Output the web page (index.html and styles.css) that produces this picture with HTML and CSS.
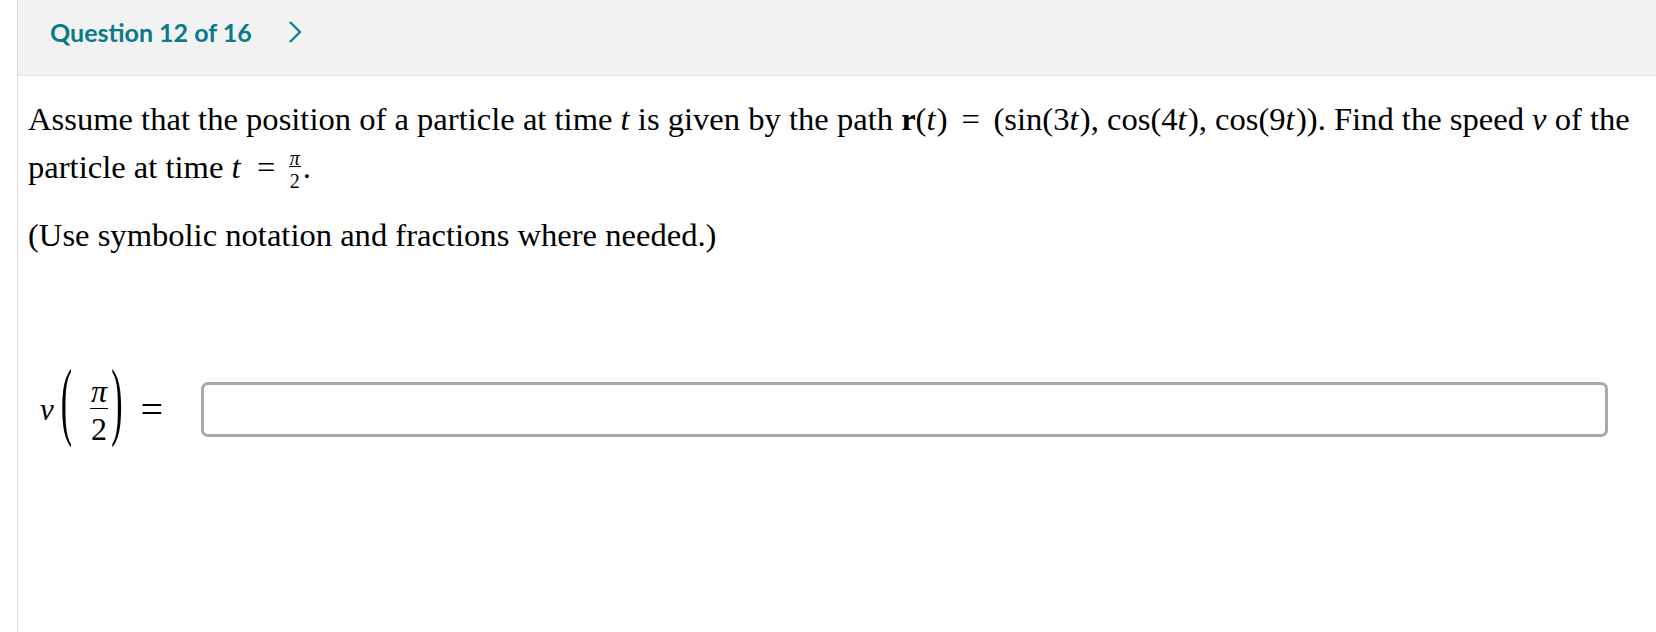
FILE: index.html
```html
<!DOCTYPE html>
<html lang="en">
<head>
<meta charset="utf-8">
<title>Question 12 of 16</title>
<link rel="stylesheet" href="styles.css">
</head>
<body>
<div class="page">
  <header class="qbar">
    <span class="qtitle">Question 12 of 16</span>
    <button class="qnext" aria-label="Next question">
      <svg width="14" height="24" viewBox="0 0 14 24"><path d="M2 2 L12 12 L2 22" fill="none" stroke="#007b8c" stroke-width="2.2"/></svg>
    </button>
  </header>
  <main class="content">
    <p class="prompt"><span>Assume that the position of a particle at time</span> <i class="mv">t</i> <span>is given by the path</span> <span class="m"><b class="mb">r</b>(<i class="mv">t</i>)<span class="eq">=</span>(sin(3<i class="mv">t</i>), cos(4<i class="mv">t</i>), cos(9<i class="mv">t</i>))</span>. <span>Find the speed</span> <i class="mv">v</i> <span>of the</span> <span>particle at time</span> <i class="mv">t</i><span class="eq eq2">=</span><span class="frac"><span class="num">π</span><span class="den">2</span></span>.</p>
    <p class="prompt">(Use symbolic notation and fractions where needed.)</p>
    <div class="answer">
      <div class="label">
        <i class="mv">v</i>
        <span class="paren">(</span>
        <span class="dfrac"><span class="dnum">π</span><span class="dden">2</span></span>
        <span class="paren">)</span>
        <span class="deq">=</span>
      </div>
      <input class="field" type="text" aria-label="answer">
    </div>
  </main>
</div>
</body>
</html>
```
FILE: styles.css
```css
html, body {
  margin: 0;
  padding: 0;
  background: #fff;
}
.page {
  margin-left: 17px;
  border-left: 1px solid #dcdcdc;
  min-height: 632px;
  box-sizing: border-box;
}
.qbar {
  height: 76px;
  background: #f2f2f2;
  border-bottom: 1px solid #e6e6e6;
  display: flex;
  align-items: flex-start;
  padding: 16px 0 0 32px;
  box-sizing: border-box;
  gap: 36px;
}
.qtitle {
  font-family: Lato, "Open Sans", sans-serif;
  font-weight: 700;
  font-size: 25px;
  line-height: 32px;
  color: #0a7a8b;
}
.qnext {
  border: 0;
  background: none;
  padding: 0;
  margin-top: 4px;
  display: flex;
  cursor: pointer;
}
.content {
  padding: 19px 4px 0 10px;
  font-family: "Liberation Serif", "Times New Roman", serif;
  color: #000;
}
.prompt {
  margin: 0 0 20px 0;
  font-size: 32.6px;
  line-height: 48px;
}
.mv { font-style: italic; }
.m .mv { padding-right: 0.04em; }
.mb { font-weight: 700; }
.eq { margin: 0 0.42em; }
.eq2 { margin: 0 0.35em 0 0.5em; }
.frac {
  display: inline-flex;
  flex-direction: column;
  align-items: center;
  vertical-align: 13px;
  font-size: 20px;
  line-height: 15px;
  margin: 0 2px;
}
.frac .num {
  font-style: italic;
  border-bottom: 1px solid #000;
  padding: 0 1px;
}
.frac .den { padding-top: 7px; }
.answer {
  display: flex;
  align-items: center;
  margin-top: 123px;
  height: 55px;
}
.label {
  display: flex;
  align-items: center;
  width: 161px;
  padding-left: 12px;
  font-family: "Liberation Serif", "Times New Roman", serif;
  font-size: 31px;
  line-height: 31px;
}
.label .mv { margin-right: 7px; }
.paren {
  display: inline-block;
  font-size: 34px;
  transform: translateY(-9px) scaleY(2.55);
  line-height: 34px;
}
.dfrac {
  display: inline-flex;
  flex-direction: column;
  align-items: center;
  margin: 0 3px 0 18px;
  font-size: 32px;
  line-height: 26px;
}
.dnum {
  font-style: italic;
  border-bottom: 1.5px solid #000;
  padding: 0 1px 4px;
}
.dden { padding-top: 7px; }
.deq {
  margin-left: 18px;
  font-size: 40px;
}
.field {
  width: 1407px;
  height: 55px;
  box-sizing: border-box;
  border: 3px solid #a8a8a8;
  border-radius: 7px;
  background: #fff;
  outline: none;
}
```
